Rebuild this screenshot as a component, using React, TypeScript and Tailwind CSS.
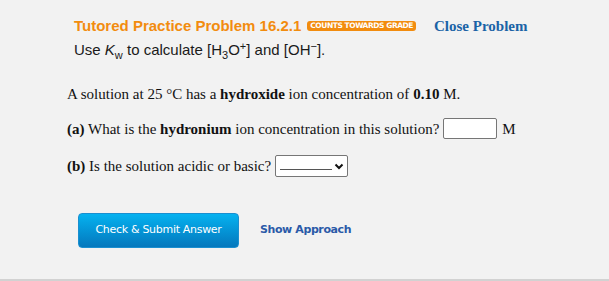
export default function App() {
  return (
    <div className="relative h-[281px] w-[609px] overflow-hidden bg-[#f2f2f2]">
      <div className="flex flex-col pl-[74px] pt-[17px]">
        <div className="flex h-[18px] items-center">
          <span className="font-['Liberation_Sans',Arial,sans-serif] text-[15px] font-bold leading-[18px] text-[#f28c0f]">
            Tutored Practice Problem 16.2.1
          </span>
          <span className="ml-[6px] rounded-[3px] bg-[#f28c0f] px-[3px] font-['DejaVu_Sans',sans-serif] text-[7.5px] font-bold leading-[10px] tracking-[-0.45px] text-white">
            COUNTS TOWARDS GRADE
          </span>
          <span className="ml-[18px] font-['Liberation_Serif',serif] text-[15px] font-bold leading-[18px] text-[#1a63a6]">
            Close Problem
          </span>
        </div>
        <div className="mt-[6px] font-['Liberation_Sans',Arial,sans-serif] text-[15px] leading-[18px] text-[#1a1a1a]">
          Use <i>K</i>
          <span className="relative top-[4px] text-[11px] leading-none">w</span> to calculate [H
          <span className="relative top-[4px] text-[11px] leading-none">3</span>O
          <span className="relative top-[-5px] text-[11px] leading-none">+</span>] and [OH
          <span className="relative top-[-5px] text-[11px] leading-none">−</span>].
        </div>
      </div>

      <div className="mt-[26px] pl-[67px] font-['Liberation_Serif',serif] text-[15px] leading-[18px] text-[#111]">
        <p>
          A solution at 25 °C has a <b>hydroxide</b> ion concentration of <b>0.10</b> M.
        </p>
        <div className="mt-[15px] flex h-[21px] items-center">
          <span>
            <b>(a)</b> What is the <b>hydronium</b> ion concentration in this solution?
          </span>
          <div className="ml-[4px] h-[21px] w-[54px] rounded-[2px] border border-[#767676] bg-white" />
          <span className="ml-[5px]">M</span>
        </div>
        <div className="mt-[16px] flex h-[22px] items-center">
          <span>
            <b>(b)</b> Is the solution acidic or basic?
          </span>
          <div className="ml-[4px] flex h-[22px] w-[73px] items-center rounded-[2px] border border-[#767676] bg-white pl-[4px] pr-[3px]">
            <span className="mt-[6px] h-[1px] w-[52px] border-b border-[#555]" />
            <svg className="ml-auto" width="10" height="8" viewBox="0 0 10 8">
              <path d="M1.5 2.5 L5 6 L8.5 2.5" fill="none" stroke="#111" strokeWidth="2" />
            </svg>
          </div>
        </div>
      </div>

      <div className="mt-[36px] flex items-center pl-[78px]">
        <button className="h-[35px] w-[161px] rounded-[4px] border border-[#1a8fd0] bg-gradient-to-b from-[#06b2f0] to-[#0578bd] font-['DejaVu_Sans',Tahoma,sans-serif] text-[11px] tracking-[-0.3px] text-white">
          Check &amp; Submit Answer
        </button>
        <span className="ml-[21px] font-['DejaVu_Sans',Tahoma,sans-serif] text-[11px] font-bold tracking-[-0.4px] text-[#2a5aa8]">
          Show Approach
        </span>
      </div>

      <div className="absolute bottom-0 left-0 h-[2px] w-full bg-[#d2d2d2]" />
    </div>
  );
}
